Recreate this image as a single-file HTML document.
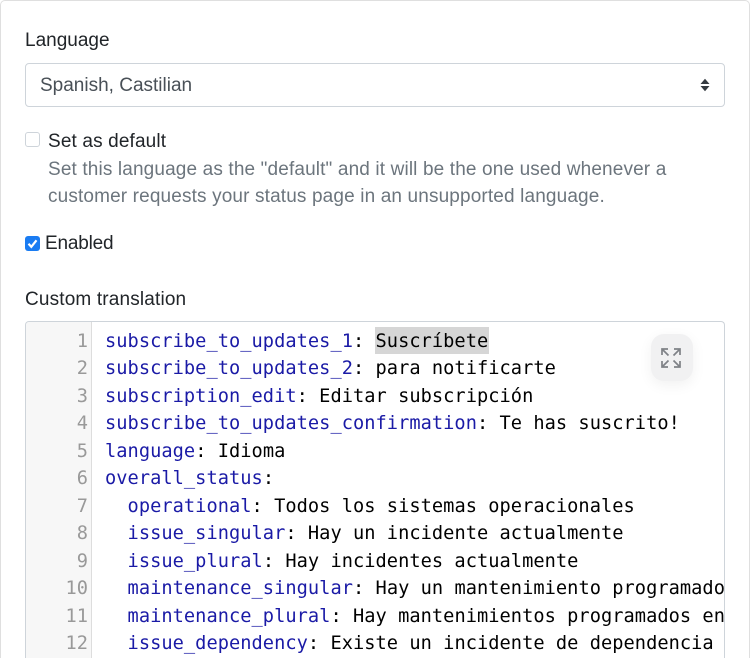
<!DOCTYPE html>
<html><head><meta charset="utf-8"><style>
html,body{margin:0;padding:0;background:#fff;width:750px;height:658px;overflow:hidden}
body{position:relative;font-family:"Liberation Sans",sans-serif;color:#212529}
.t{position:absolute;white-space:nowrap;font-size:19px;line-height:24px}
.g{color:#6c757d;letter-spacing:.14px}
.ed{position:absolute;left:25px;top:321px;width:698px;height:337px;border:1px solid #ced4da;border-bottom:none;border-radius:4px 4px 0 0;overflow:hidden;background:#fff}
.gut{position:absolute;left:0;top:0;width:65px;height:337px;background:#f7f7f7;border-right:1px solid #ddd}
.n,.c{position:absolute;font-family:"DejaVu Sans Mono",monospace;font-size:18.67px;line-height:27.5px;white-space:pre}
.n{right:636px;color:#999;text-align:right;letter-spacing:.04px}
.c{left:79px;color:#000;letter-spacing:.04px}
.c b{font-weight:normal;color:#1a1aa6}
.hl{position:absolute;left:349px;top:5px;width:114px;height:27px;background:#d6d6d6}
</style></head><body>
<div style="position:absolute;left:0;top:0;width:748px;height:657px;border:1px solid #dfdfdf;border-bottom:none;border-radius:5px 5px 0 0"></div>
<div class="t" style="left:25px;top:29px">Language</div>
<div style="position:absolute;left:25px;top:63px;width:698px;height:42px;border:1px solid #ced4da;border-radius:4px"></div>
<div class="t" style="left:40px;top:74px;color:#495057">Spanish, Castilian</div>
<svg style="position:absolute;left:699px;top:78px" width="12" height="14" viewBox="0 0 12 14"><path d="M1.500 6 L6 .8 L10.500 6Z M1.500 8 L6 13.200 L10.500 8Z" fill="#343a40"/></svg>
<div style="position:absolute;left:25px;top:132px;width:13px;height:13px;border:1px solid #ced4da;border-radius:3px;background:#fff"></div>
<div class="t" style="left:48px;top:130px;letter-spacing:.14px">Set as default</div>
<div class="t g" style="left:48px;top:158px">Set this language as the "default" and it will be the one used whenever a</div>
<div class="t g" style="left:48px;top:185px">customer requests your status page in an unsupported language.</div>
<svg style="position:absolute;left:25px;top:236px" width="15" height="15" viewBox="0 0 15 15"><rect width="15" height="15" rx="3" fill="#1a7cf2"/><path d="M3.500 7.800 L6.300 10.800 L11.500 4.300" fill="none" stroke="#fff" stroke-width="2.200"/></svg>
<div class="t" style="left:45px;top:232px;letter-spacing:-.2px">Enabled</div>
<div class="t" style="left:25px;top:288px;letter-spacing:.16px">Custom translation</div>
<div class="ed">
<div class="gut"></div>
<div class="hl"></div>
<div class="n" style="top:5.500px">1
2
3
4
5
6
7
8
9
10
11
12</div>
<div class="c" style="top:5.500px"><b>subscribe_to_updates_1</b>: Suscríbete
<b>subscribe_to_updates_2</b>: para notificarte
<b>subscription_edit</b>: Editar subscripción
<b>subscribe_to_updates_confirmation</b>: Te has suscrito!
<b>language</b>: Idioma
<b>overall_status</b>:
  <b>operational</b>: Todos los sistemas operacionales
  <b>issue_singular</b>: Hay un incidente actualmente
  <b>issue_plural</b>: Hay incidentes actualmente
  <b>maintenance_singular</b>: Hay un mantenimiento programado
  <b>maintenance_plural</b>: Hay mantenimientos programados en
  <b>issue_dependency</b>: Existe un incidente de dependencia</div>
</div>
<div style="position:absolute;left:651px;top:334px;width:42px;height:47px;background:#f1f1f2;border-radius:13px;box-shadow:0 4px 14px rgba(0,0,0,.06)"></div>
<svg style="position:absolute;left:661px;top:348px" width="20" height="20" viewBox="0 0 20 20" fill="none" stroke="#7f8287" stroke-width="1.700"><path d="M1 7V1H7M1 1L7.500 7.500M13 1H19V7M19 1L12.500 7.500M1 13V19H7M1 19L7.500 12.500M19 13V19H13M19 19L12.500 12.500"/></svg>
</body></html>
